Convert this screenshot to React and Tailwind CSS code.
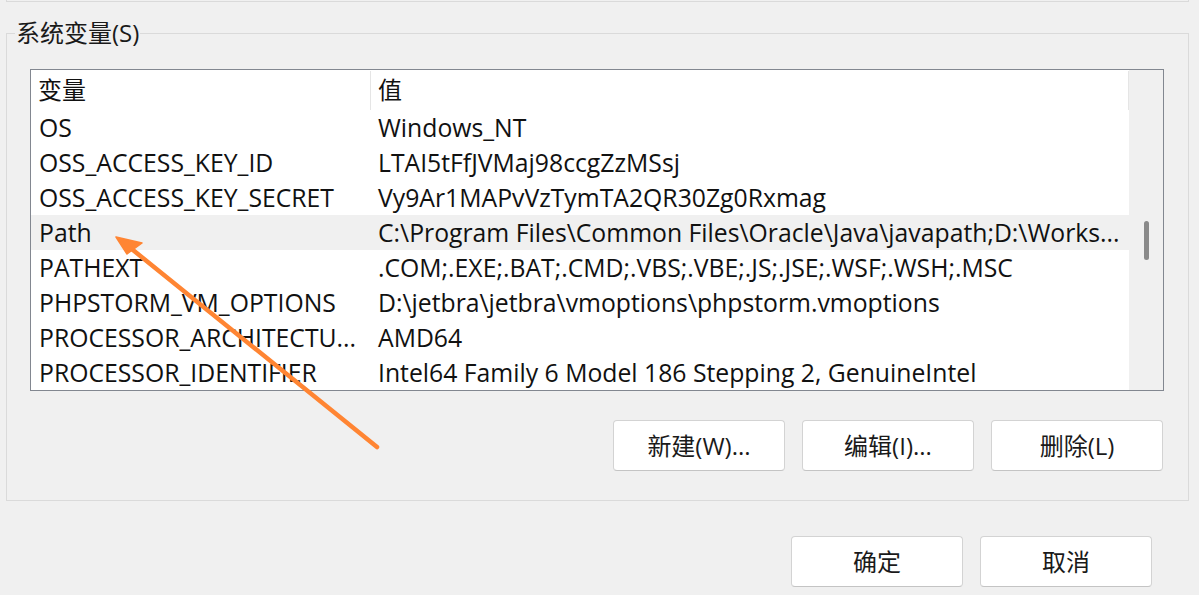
import React from "react";

const font = { fontFamily: '"Open Sans", "Noto Sans CJK SC", sans-serif' };

const rows = [
  ["OS", "Windows_NT"],
  ["OSS_ACCESS_KEY_ID", "LTAI5tFfJVMaj98ccgZzMSsj"],
  ["OSS_ACCESS_KEY_SECRET", "Vy9Ar1MAPvVzTymTA2QR30Zg0Rxmag"],
  ["Path", "C:\\Program Files\\Common Files\\Oracle\\Java\\javapath;D:\\Works...", true],
  ["PATHEXT", ".COM;.EXE;.BAT;.CMD;.VBS;.VBE;.JS;.JSE;.WSF;.WSH;.MSC"],
  ["PHPSTORM_VM_OPTIONS", "D:\\jetbra\\jetbra\\vmoptions\\phpstorm.vmoptions"],
  ["PROCESSOR_ARCHITECTU...", "AMD64"],
  ["PROCESSOR_IDENTIFIER", "Intel64 Family 6 Model 186 Stepping 2, GenuineIntel"],
];

function Btn({ children }) {
  return (
    <button className="w-[172px] h-[51px] bg-white border border-[#d3d3d3] border-b-[#c4c4c4] rounded-[4px] text-[24px] text-[#1a1a1a] flex items-center justify-center">
      {children}
    </button>
  );
}

export default function App() {
  return (
    <div
      className="relative w-[1199px] h-[595px] bg-[#f0f0f0] overflow-hidden text-[#111]"
      style={font}
    >
      <div className="mx-[6px] w-[1183px] h-[2px] border-x border-b border-[#dadada]" />

      <div className="relative ml-[6px] mt-[31px] w-[1183px] h-[468px] border border-[#dadada]">
        <div className="absolute -top-[19px] left-[8px] px-[1px] bg-[#f0f0f0] text-[24px] leading-[36px] text-[#1a1a1a]">
          系统变量(S)
        </div>

        <div className="ml-[23px] mt-[35px] w-[1134px] h-[322px] border border-[#828790] bg-white flex">
          <div className="flex-1 flex flex-col min-w-0">
            <div className="h-[40px] flex text-[24px]">
              <div className="w-[339px] pl-[7px] flex items-center">变量</div>
              <div className="w-px mt-[1px] bg-[#e5e5e5]" />
              <div className="flex-1 pl-[7px] flex items-center">值</div>
              <div className="w-px mt-[1px] bg-[#e5e5e5]" />
            </div>
            {rows.map(([k, v, sel]) => (
              <div
                key={k}
                className={`h-[35px] flex items-center text-[24.75px] whitespace-nowrap ${
                  sel ? "bg-[#f0f0f0]" : ""
                }`}
              >
                <div className="w-[340px] pl-[8px] overflow-hidden">{k}</div>
                <div className="flex-1 pl-[7px] overflow-hidden">{v}</div>
              </div>
            ))}
          </div>
          <div className="w-[34px] bg-[#f0f0f0] flex flex-col">
            <div className="mt-[151px] ml-[15px] w-[5px] h-[39px] rounded-full bg-[#8a8a8a]" />
          </div>
        </div>

        <div className="mt-[29px] mr-[25px] flex justify-end gap-[17px]">
          <Btn>新建(W)...</Btn>
          <Btn>编辑(I)...</Btn>
          <Btn>删除(L)</Btn>
        </div>
      </div>

      <div className="mt-[35px] mr-[47px] flex justify-end gap-[17px]">
        <Btn>确定</Btn>
        <Btn>取消</Btn>
      </div>

      <svg
        className="absolute inset-0 pointer-events-none"
        width="1199"
        height="595"
        viewBox="0 0 1199 595"
      >
        <line
          x1="377"
          y1="447"
          x2="128"
          y2="246"
          stroke="#ff8533"
          strokeWidth="4.5"
          strokeLinecap="round"
        />
        <polygon points="116,237 142,243 127,254" fill="#ff8533" stroke="#ff8533" strokeWidth="1.5" strokeLinejoin="round" />
      </svg>
    </div>
  );
}
